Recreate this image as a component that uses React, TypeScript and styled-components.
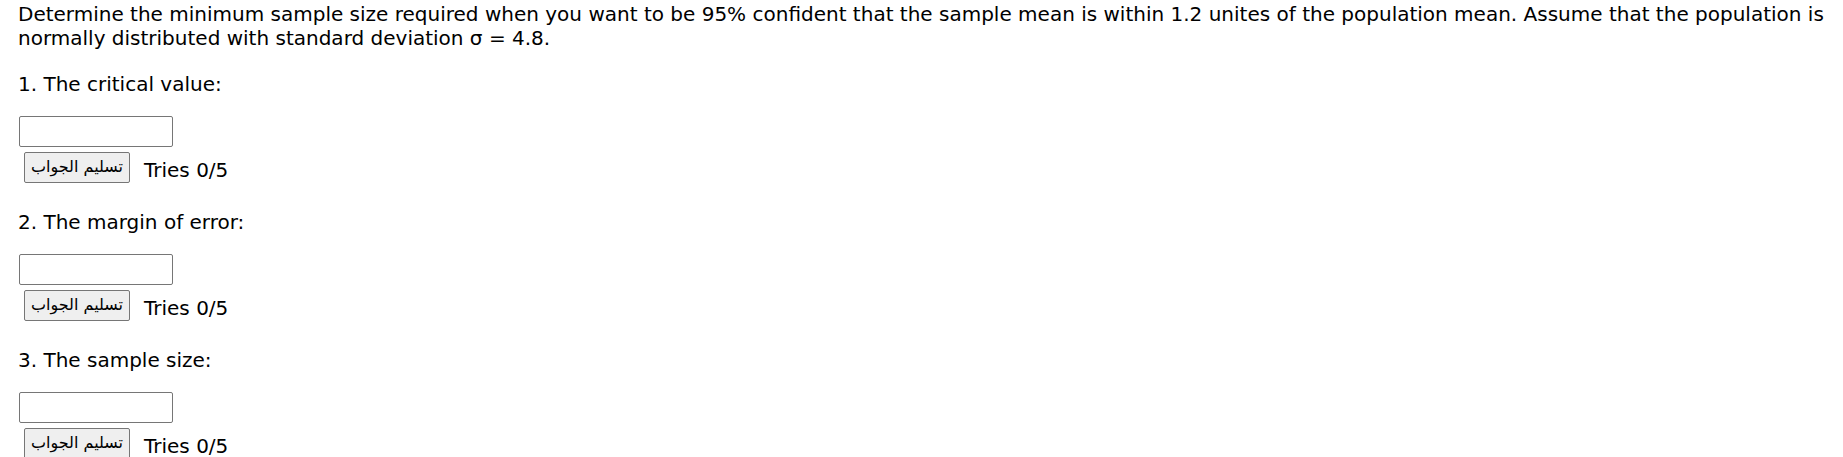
import React from 'react';
import styled, {createGlobalStyle} from 'styled-components';

const GlobalStyle = createGlobalStyle`
    body {
        margin: 0;
        background: #ffffff;
        color: #000000;
        font-family: "DejaVu Sans", Verdana, sans-serif;
    }
`;

const parts = [
    "1. The critical value:",
    "2. The margin of error:",
    "3. The sample size:",
];

export default function App() {
    return (
        <>
            <GlobalStyle/>
            <Page>
                <Question>
                    Determine the minimum sample size required when you want to be 95% confident that the sample mean is
                    within 1.2 unites of the population mean. Assume that the population is normally distributed with
                    standard deviation σ = 4.8.
                </Question>
                {parts.map((label) => (
                    <Part key={label}>
                        <PartLabel>{label}</PartLabel>
                        <AnswerInput type="text"/>
                        <SubmitRow>
                            <SubmitButton type="button">تسليم الجواب</SubmitButton>
                            <Tries>Tries 0/5</Tries>
                        </SubmitRow>
                    </Part>
                ))}
            </Page>
        </>
    );
}

const Page = styled.div`
    padding: 2px 12px 0 18px;
    font-size: 20px;
    line-height: 24px;
`;

const Question = styled.p`
    margin: 0;
`;

const Part = styled.section`
    display: flex;
    flex-direction: column;
    align-items: flex-start;
    margin-top: 22px;

    & + & {
        margin-top: 27px;
    }
`;

const PartLabel = styled.p`
    margin: 0 0 20px;
`;

const AnswerInput = styled.input`
    box-sizing: border-box;
    width: 154px;
    height: 31px;
    margin: 0 0 0 1px;
    border: 1px solid #767676;
    border-radius: 2px;
    background: #ffffff;
`;

const SubmitRow = styled.div`
    display: flex;
    align-items: center;
    gap: 14px;
    margin-top: 5px;
    padding-left: 6px;
`;

const SubmitButton = styled.button`
    box-sizing: border-box;
    width: 106px;
    height: 31px;
    padding: 0 6px 3px;
    border: 1px solid #767676;
    border-radius: 2px;
    background: #efefef;
    color: #000000;
    font-family: "DejaVu Serif", "DejaVu Sans", serif;
    font-size: 16px;
`;

const Tries = styled.span`
    padding-top: 4px;
`;
